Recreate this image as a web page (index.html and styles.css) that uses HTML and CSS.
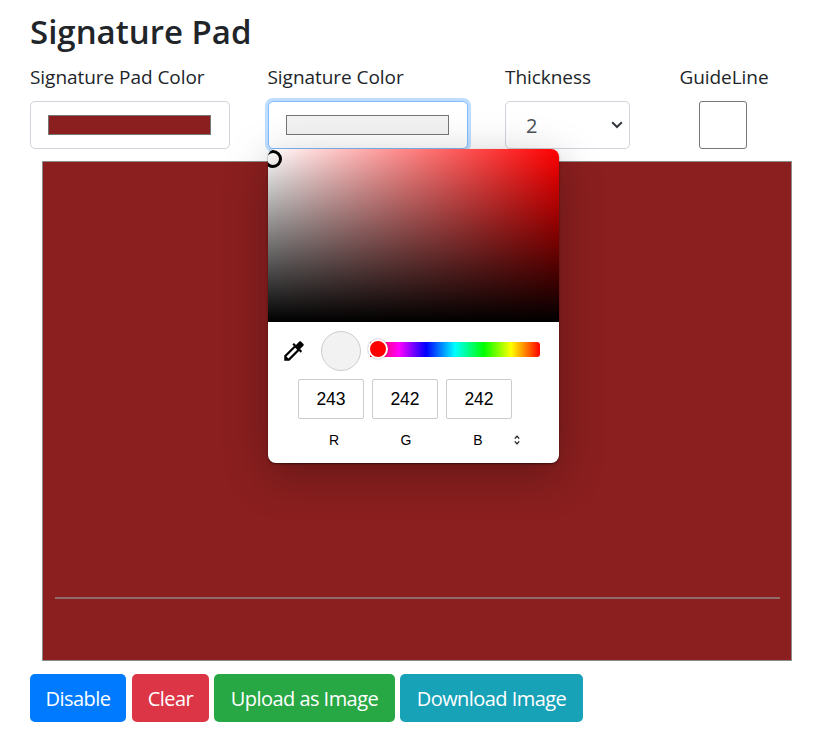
FILE: index.html
```html
<!DOCTYPE html>
<html lang="en">
<head>
<meta charset="utf-8">
<title>Signature Pad</title>
<link rel="stylesheet" href="styles.css">
</head>
<body>
<main class="page">
  <h1 class="title">Signature Pad</h1>
  <div class="controls">
    <div class="field field-color">
      <label class="label">Signature Pad Color</label>
      <div class="color-input"><span class="swatch swatch-pad"></span></div>
    </div>
    <div class="field field-color field-focused">
      <label class="label">Signature Color</label>
      <div class="color-input color-input-focus"><span class="swatch swatch-ink"></span></div>
      <div class="picker">
        <div class="sat"><span class="sat-thumb"></span></div>
        <div class="picker-body">
          <div class="picker-row">
            <svg class="dropper" viewBox="0 0 24 24" width="26" height="26"><path d="M20.71 5.630l-2.340-2.340c-.39-.39-1.020-.39-1.410 0l-3.120 3.120-1.930-1.910-1.410 1.410 1.420 1.420L3 16.250V21h4.750l8.920-8.920 1.420 1.420 1.410-1.410-1.920-1.920 3.120-3.120c.4-.4.4-1.030.01-1.420zM6.920 19L5 17.080l8.060-8.060 1.920 1.920L6.920 19z" fill="#000"/></svg>
            <span class="preview"></span>
            <div class="hue"><span class="hue-thumb"></span></div>
          </div>
          <div class="rgb-inputs">
            <span class="rgb-box">243</span>
            <span class="rgb-box">242</span>
            <span class="rgb-box">242</span>
          </div>
          <div class="rgb-labels">
            <span class="rgb-label">R</span>
            <span class="rgb-label">G</span>
            <span class="rgb-label">B</span>
            <svg class="stepper" viewBox="0 0 6 10" width="6" height="10"><path d="M.8 3.600 3 1.200l2.200 2.400M.8 6.400 3 8.800l2.200-2.400" fill="none" stroke="#111" stroke-width="1.200"/></svg>
          </div>
        </div>
      </div>
    </div>
    <div class="field field-thick">
      <label class="label">Thickness</label>
      <select class="select"><option>2</option></select>
    </div>
    <div class="field field-guide">
      <label class="label">GuideLine</label>
      <span class="check"></span>
    </div>
  </div>
  <div class="pad"><span class="guide"></span></div>
  <div class="buttons">
    <button class="btn btn-blue">Disable</button>
    <button class="btn btn-red">Clear</button>
    <button class="btn btn-green">Upload as Image</button>
    <button class="btn btn-teal">Download Image</button>
  </div>
</main>
</body>
</html>
```
FILE: styles.css
```css
* { box-sizing: border-box; }
html, body { margin: 0; padding: 0; background: #fff; }
body { font-family: "Open Sans", "Noto Sans", sans-serif; color: #212529; overflow: hidden; height: 732px; }
.page { padding: 9px 31px 0 30px; }
.title { margin: 0; font-size: 33px; line-height: 46px; font-weight: 600; letter-spacing: 0; }
.controls { display: flex; margin-top: 6px; height: 100px; }
.field { display: flex; flex-direction: column; position: relative; }
.field-color { width: 200px; margin-right: 37.500px; }
.field-thick { width: 125px; margin-right: 50px; }
.field-guide { width: 88px; align-items: center; }
.label { font-size: 19px; line-height: 28px; letter-spacing: -0.05px; margin-top: 2px; margin-bottom: 10px; height: 28px; white-space: nowrap; }
.color-input { height: 48px; border: 1px solid #ced4da; border-radius: 5px; padding: 13px 18px 13px 17px; background: #fff; display: flex; }
.color-input-focus { border-color: #80bdff; box-shadow: 0 0 0 3px rgba(0,123,255,.25); }
.swatch { flex: 1; border: 1px solid #767676; }
.swatch-pad { background: #8b1f1f; }
.swatch-ink { background: #f3f2f2; }
.select { appearance: none; height: 48px; width: 125px; border: 1px solid #ced4da; border-radius: 5px; background: #fff url("data:image/svg+xml,%3Csvg xmlns='http://www.w3.org/2000/svg' width='12' height='8'%3E%3Cpath d='M1.200 1.200 6 6l4.800-4.800' fill='none' stroke='%23343a40' stroke-width='2'/%3E%3C/svg%3E") no-repeat right 6px center; color: #495057; font: 20px "Open Sans", sans-serif; padding: 0 12px 0 20px; }
.check { width: 48px; height: 48px; margin-right: 2px; border: 1px solid #767676; border-radius: 3px; background: #fff; display: block; }
.pad { position: relative; margin-left: 12px; height: 500px; width: 750px; border: 1px solid #8d8d8d; background: #8b1f1f; }
.guide { position: absolute; left: 12px; right: 11px; top: 435px; height: 2px; background: #916c6c; }
.buttons { display: flex; margin-top: 13px; }
.btn { height: 48px; border: 0; border-radius: 5px; color: #fff; font: 20px "Open Sans", sans-serif; letter-spacing: -0.55px; padding: 0; text-align: center; margin-right: 5px; }
.btn-blue { background: #007bff; width: 96px; margin-right: 6px; }
.btn-red { background: #dc3545; width: 77px; }
.btn-green { background: #28a745; width: 181px; }
.btn-teal { background: #17a2b8; width: 183px; }
.picker { position: absolute; left: .5px; top: 88px; width: 291px; height: 314px; background: #fff; border-radius: 8px; overflow: hidden; box-shadow: 0 12px 45px rgba(0,0,0,.28), 0 1px 2px rgba(0,0,0,.5); z-index: 5; }
.sat { position: relative; height: 173px; background: linear-gradient(to top, #000, transparent), linear-gradient(to right, #fff, #f00); }
.sat-thumb { position: absolute; left: -4px; top: 1px; width: 18px; height: 18px; border: 3px solid #000; border-radius: 50%; }
.picker-body { position: relative; height: 141px; }
.picker-row { display: flex; align-items: center; height: 40px; margin-top: 9px; padding-left: 13px; }
.dropper { display: block; margin-top: -1px; }
.preview { width: 40px; height: 40px; border-radius: 50%; background: #f3f2f2; border: 1px solid #ccc; margin-left: 14px; }
.hue { position: relative; width: 170px; height: 15px; margin: -4px 0 0 9px; border-radius: 0 3px 3px 0; background: linear-gradient(to right, #f00 0%, #f0f 17%, #00f 33%, #0ff 50%, #0f0 67%, #ff0 83%, #f00 100%); }
.hue-thumb { position: absolute; left: -2px; top: -2.500px; width: 20px; height: 20px; border-radius: 50%; background: #f00; border: 2px solid #fff; box-shadow: 0 0 2px rgba(0,0,0,.4); }
.rgb-inputs { display: flex; gap: 8px; padding-left: 30px; margin-top: 8px; }
.rgb-box { width: 66px; height: 40px; border: 1px solid #ccc; border-radius: 2px; display: flex; align-items: center; justify-content: center; font: 17.500px "Liberation Sans", sans-serif; color: #000; }
.rgb-labels { display: flex; align-items: center; padding-left: 30px; margin-top: 12px; height: 18px; font: 14px "Liberation Sans", sans-serif; color: #000; }
.rgb-label { width: 72px; text-align: center; }
.stepper { display: block; margin-left: 0; }
```
